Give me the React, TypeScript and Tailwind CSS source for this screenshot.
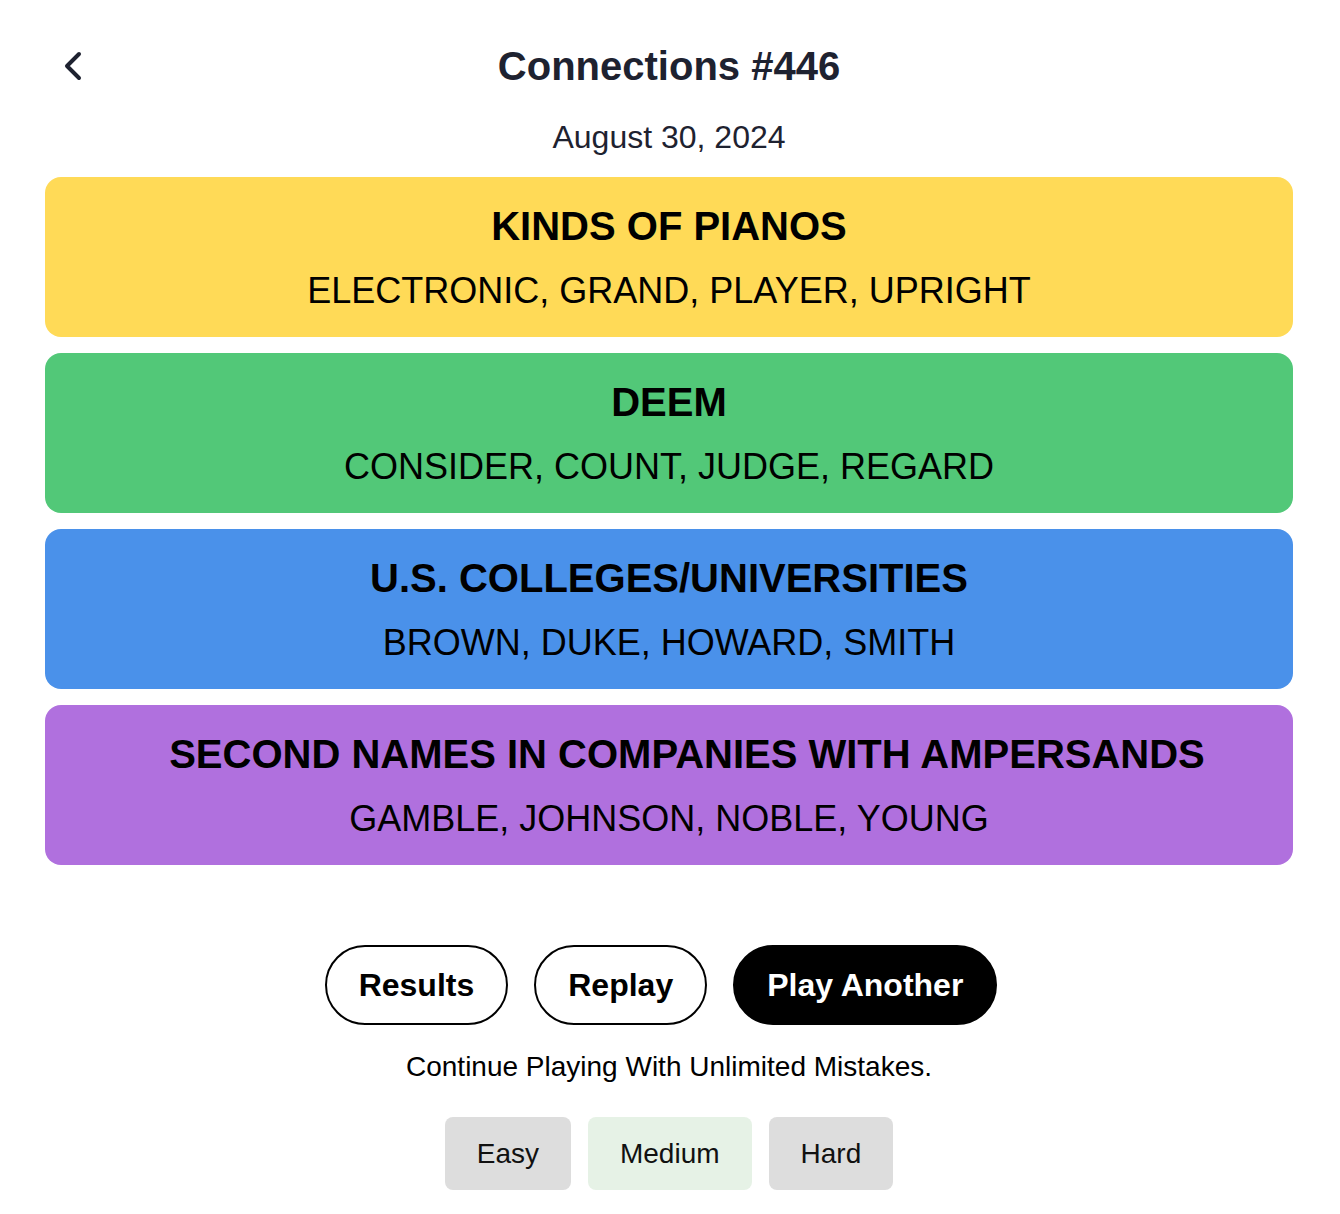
import { ChevronLeft } from "lucide-react";

const GROUPS = [
  { title: "KINDS OF PIANOS", words: "ELECTRONIC, GRAND, PLAYER, UPRIGHT", color: "bg-[#ffda57]", shift: "" },
  { title: "DEEM", words: "CONSIDER, COUNT, JUDGE, REGARD", color: "bg-[#52c878]", shift: "" },
  { title: "U.S. COLLEGES/UNIVERSITIES", words: "BROWN, DUKE, HOWARD, SMITH", color: "bg-[#4a91ea]", shift: "" },
  {
    title: "SECOND NAMES IN COMPANIES WITH AMPERSANDS",
    words: "GAMBLE, JOHNSON, NOBLE, YOUNG",
    color: "bg-[#b070de]",
    shift: "pl-[36px]",
  },
];

function GroupCard({ title, words, color, shift }: { title: string; words: string; color: string; shift: string }) {
  return (
    <div className={`flex h-[160px] flex-col items-center justify-center rounded-[16px] text-black ${color}`}>
      <div className={`text-[40px] font-bold leading-[48px] ${shift}`}>{title}</div>
      <div className="mt-[19px] text-[36px] leading-[44px]">{words}</div>
    </div>
  );
}

export default function App() {
  return (
    <div className="min-h-[1214px] bg-white pl-[45px] pr-[47px] font-['Liberation_Sans',Arial,sans-serif]">
      <header className="mt-[42px] flex h-[48px] items-center">
        <button type="button" aria-label="Back" className="ml-[4px] w-[48px] text-[#1e2230]">
          <ChevronLeft size={48} strokeWidth={2} />
        </button>
        <h1 className="flex-1 text-center text-[40px] font-bold leading-[48px] text-[#1e2230]">Connections #446</h1>
        <div className="w-[52px]" />
      </header>

      <div className="mt-[27px] text-center text-[32px] leading-[40px] text-[#1e2230]">August 30, 2024</div>

      <div className="mt-[20px] flex flex-col gap-[16px]">
        {GROUPS.map((g) => (
          <GroupCard key={g.title} {...g} />
        ))}
      </div>

      <div className="mt-[80px] flex justify-center gap-[26px] pr-[16px]">
        <button type="button" className="h-[80px] rounded-full border-2 border-black bg-white px-8 text-[32px] font-bold text-black">
          Results
        </button>
        <button type="button" className="h-[80px] rounded-full border-2 border-black bg-white px-8 text-[32px] font-bold text-black">
          Replay
        </button>
        <button type="button" className="h-[80px] rounded-full border-2 border-black bg-black px-8 text-[32px] font-bold text-white">
          Play Another
        </button>
      </div>

      <p className="mt-[24px] text-center text-[28px] leading-[36px] text-black">Continue Playing With Unlimited Mistakes.</p>

      <div className="mt-[32px] flex justify-center gap-[17px]">
        <button type="button" className="h-[73px] rounded-[8px] bg-[#dddddd] px-8 text-[28px] text-[#111]">Easy</button>
        <button type="button" className="h-[73px] rounded-[8px] bg-[#e6f2e6] px-8 text-[28px] text-[#111]">Medium</button>
        <button type="button" className="h-[73px] rounded-[8px] bg-[#dddddd] px-8 text-[28px] text-[#111]">Hard</button>
      </div>
    </div>
  );
}
